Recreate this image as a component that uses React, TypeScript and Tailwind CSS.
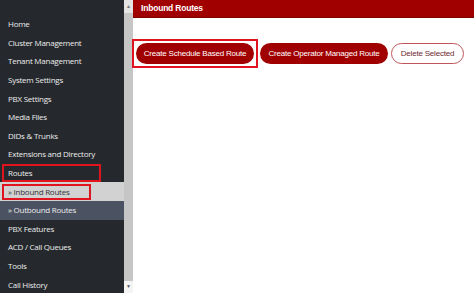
import React from "react";

const items = [
  "Home",
  "Cluster Management",
  "Tenant Management",
  "System Settings",
  "PBX Settings",
  "Media Files",
  "DIDs & Trunks",
  "Extensions and Directory",
];
const after = ["PBX Features", "ACD / Call Queues", "Tools", "Call History"];

export default function App() {
  return (
    <div className="flex w-[474px] h-[293px] overflow-hidden bg-white" style={{ fontFamily: "'Liberation Sans', Arial, sans-serif" }}>
      <div className="w-[124px] shrink-0 bg-[#25292d] pt-[15px] text-[8px] tracking-[-0.25px] font-medium text-[#ececec]" style={{ fontFamily: "'Open Sans', sans-serif" }}>
        {items.map((t) => (
          <div key={t} className="h-[18.6px] flex items-center pl-[8px]">{t}</div>
        ))}
        <div className="h-[18.6px] flex items-center">
          <div className="ml-[2px] w-[99px] h-[18px] border-2 border-[#e0141e] flex items-center pl-[4px]">Routes</div>
        </div>
        <div className="h-[18.6px] flex items-center bg-[#d2d2d2] text-[#333]">
          <div className="ml-[2px] w-[89px] h-[16px] border-2 border-[#e0141e] flex items-center pl-[4px]">» Inbound Routes</div>
        </div>
        <div className="h-[18.6px] flex items-center pl-[8px] bg-[#4b5262]">» Outbound Routes</div>
        {after.map((t) => (
          <div key={t} className="h-[18.6px] flex items-center pl-[8px]">{t}</div>
        ))}
      </div>
      <div className="w-[9px] shrink-0 bg-[#c6c6c6] flex flex-col justify-between">
        <div className="h-[13px] bg-[#e4e4e4] flex items-center justify-center text-[5px] text-[#777]">▲</div>
        <div className="h-[12px] bg-[#f4f4f4] flex items-center justify-center text-[5px] text-[#555]">▼</div>
      </div>
      <div className="flex-1 flex flex-col">
        <div className="h-[18px] bg-[#a10000] border-b border-[#7a0000] flex items-center pl-[8px] text-white font-bold text-[8.5px] tracking-[-0.2px]">
          Inbound Routes
        </div>
        <div className="flex items-center mt-[21px] text-[8px] tracking-[-0.2px]">
          <div className="shrink-0 ml-[-1px] border-2 border-[#e0141e] p-[2px]">
            <div className="w-[118px] h-[21px] rounded-full bg-[#a10000] text-white flex items-center justify-center whitespace-nowrap">Create Schedule Based Route</div>
          </div>
          <div className="shrink-0 ml-[2px] w-[128px] h-[21px] rounded-full bg-[#a10000] text-white flex items-center justify-center whitespace-nowrap">Create Operator Managed Route</div>
          <div className="shrink-0 ml-[3px] w-[73px] h-[21px] rounded-full border border-[#c0565b] text-[#6e2a2f] flex items-center justify-center whitespace-nowrap">Delete Selected</div>
        </div>
      </div>
    </div>
  );
}
